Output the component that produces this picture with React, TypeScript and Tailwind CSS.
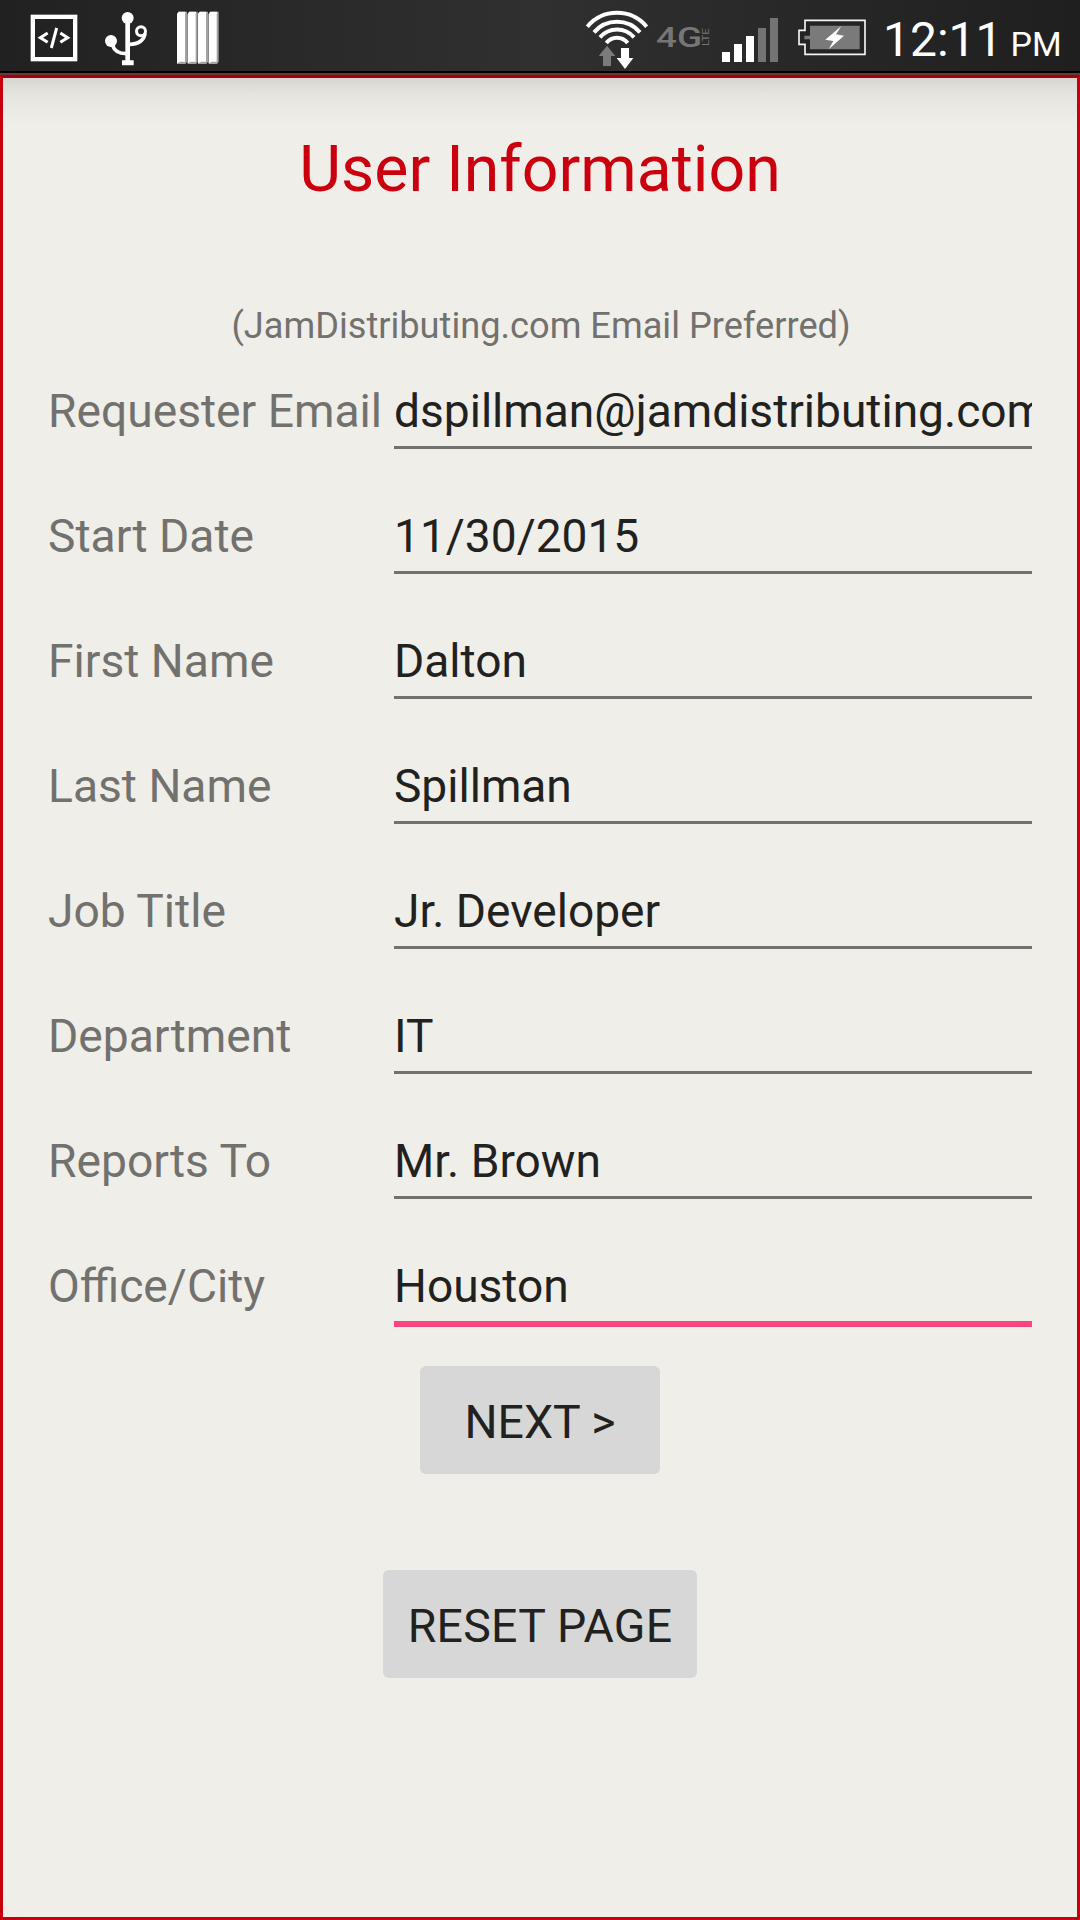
import React, { useState } from 'react';

interface Field {
  id: string;
  label: string;
  value: string;
}

const initialFields: Field[] = [
  { id: 'email', label: 'Requester Email', value: 'dspillman@jamdistributing.com' },
  { id: 'startDate', label: 'Start Date', value: '11/30/2015' },
  { id: 'firstName', label: 'First Name', value: 'Dalton' },
  { id: 'lastName', label: 'Last Name', value: 'Spillman' },
  { id: 'jobTitle', label: 'Job Title', value: 'Jr. Developer' },
  { id: 'department', label: 'Department', value: 'IT' },
  { id: 'reportsTo', label: 'Reports To', value: 'Mr. Brown' },
  { id: 'office', label: 'Office/City', value: 'Houston' },
];

const CodeIcon = () => (
  <svg className="w-12 h-[71px] shrink-0" viewBox="90 0 144 213" fill="none" stroke="#fff">
    <rect x="98.500" y="50.500" width="127" height="127" strokeWidth="13" />
    <path d="M143 99 L121 113 L143 127 M181 99 L203 113 L181 127" strokeWidth="9" />
    <path d="M170 84 L154 144" strokeWidth="9" />
  </svg>
);

const UsbIcon = () => (
  <svg className="w-11 h-[71px] shrink-0" viewBox="312 0 132 213" fill="none">
    <circle cx="383" cy="54" r="18" fill="#fff" />
    <circle cx="333" cy="123" r="18" fill="#fff" />
    <circle cx="423" cy="94" r="13.500" stroke="#fff" strokeWidth="9" />
    <path d="M376 54h14v127h11v15h-35v-15h10z" fill="#fff" />
    <path d="M337 135 C343 153 357 161 378 161 M435 101 C433 120 415 133 388 133" stroke="#fff" strokeWidth="11" />
  </svg>
);

const StripesIcon = () => (
  <svg className="w-11 h-[71px] shrink-0" viewBox="528 0 132 213">
    {[531, 563, 594, 626].map((x) => (
      <g key={x}>
        <path d={`M${x} 42 l5 -7 h25 v150 l-5 7 h-25z`} fill="#a3a3a3" />
        <path d={`M${x} 42 l5 -7 h20 v4 l-1 4 v142 h-14 l-10 5z`} fill="#fff" />
      </g>
    ))}
  </svg>
);

const WifiIcon = () => (
  <svg className="w-16 h-[71px] shrink-0" viewBox="75 0 192 213" fill="none">
    <g stroke="#fff" strokeWidth="12">
      <path d="M82 80 A116 116 0 0 1 260 80" />
      <path d="M102 97 A91 91 0 0 1 240 97" />
      <path d="M120 112 A67 67 0 0 1 222 112" />
      <path d="M139 129 A40 40 0 0 1 203 129" />
    </g>
    <path d="M141 137 L166 168 H153 V198 H129 V168 H116z" fill="#7b7b7b" />
    <path d="M183 144 H207 V174 H220 L195 207 L170 174 H183z" fill="#fff" />
  </svg>
);

const NetworkType = () => (
  <svg className="w-[54px] h-[71px] shrink-0" viewBox="288 0 162 213" fill="#767676">
    <text x="288" y="140" textLength="138" lengthAdjust="spacingAndGlyphs" className="font-['Roboto'] font-medium text-[84px]">4G</text>
    <text transform="translate(447 138) rotate(-90)" textLength="53" lengthAdjust="spacingAndGlyphs" className="font-['Roboto'] text-[29px]">LTE</text>
  </svg>
);

const SignalIcon = () => (
  <svg className="w-[58px] h-[71px] shrink-0" viewBox="483 0 174 213">
    <path d="M486 156h24v30h-24z M522 132h24v54h-24z M558 108h24v78h-24z" fill="#fff" />
    <path d="M594 84h24v102h-24z M630 54h24v132h-24z" fill="#757373" />
  </svg>
);

const BatteryIcon = () => (
  <svg className="w-[68px] h-[71px] shrink-0" viewBox="54 0 204 213">
    <path d="M75 61 H255 V163 H75 V133 H57 V91 H75z" fill="#242222" stroke="#f4f4f4" strokeWidth="5" />
    <path d="M90 77 H239 V148 H90 V118 H73 V107 H90z" fill="#7b7a7a" />
    <path d="M184 78 L136 119 L160 123 L146 148 L192 107 L168 103z" fill="#fff" />
  </svg>
);

const StatusBar = () => (
  <div className="h-[73px] shrink-0 flex items-start bg-[linear-gradient(to_right,#222122,#303030_50%,#201f20)] border-b-2 border-black text-white pl-[30px]">
    <CodeIcon />
    <div className="ml-[26px]"><UsbIcon /></div>
    <div className="ml-7"><StripesIcon /></div>
    <div className="ml-auto"><WifiIcon /></div>
    <div className="ml-[7px]"><NetworkType /></div>
    <div className="ml-[11px]"><SignalIcon /></div>
    <div className="ml-[19px]"><BatteryIcon /></div>
    <div className="w-[214px] pl-[17px] flex items-baseline whitespace-nowrap leading-[79px]">
      <span className="text-[48px]">12:11</span>
      <span className="ml-2 text-[34px]">PM</span>
    </div>
  </div>
);

const App: React.FC = () => {
  const [fields, setFields] = useState<Field[]>(initialFields);
  const [focused, setFocused] = useState('office');

  const updateField = (id: string, value: string) => {
    setFields(fields.map((f) => (f.id === id ? { ...f, value } : f)));
  };

  return (
    <div className="w-[1080px] h-[1920px] flex flex-col overflow-hidden font-['Roboto',sans-serif] bg-[#efeee9]">
      <StatusBar />
      <div className="h-[2px] shrink-0 bg-[#6b3838]"></div>
      <main className="flex-1 flex flex-col items-center border-[3px] border-[#c7000f] border-t-[#a2000e] bg-[linear-gradient(to_bottom,#d7d6d1,#e5e4df_16px,#efeee9_46px)]">
        <h1 className="mt-[51px] h-20 leading-[80px] text-[64.4px] text-[#cb000e]">User Information</h1>
        <p className="mt-[97px] ml-0.5 h-10 leading-[40px] text-[36.2px] text-[#72716e]">(JamDistributing.com Email Preferred)</p>

        <form className="w-full pl-[45px] pr-[45px] mt-[15px]">
          {fields.map((f) => (
            <div key={f.id} className="flex h-[125px] pt-[18px]">
              <label htmlFor={f.id} className="w-[346px] shrink-0 leading-[64px] text-[46.2px] text-[#72716e] whitespace-nowrap">
                {f.label}
              </label>
              <div className="flex-1 min-w-0">
                <input
                  id={f.id}
                  type="text"
                  value={f.value}
                  onFocus={() => setFocused(f.id)}
                  onChange={(e) => updateField(f.id, e.target.value)}
                  className="block w-full h-[66px] text-[46.1px] text-[#212120] bg-transparent outline-none"
                />
                <div className={focused === f.id ? 'mt-px h-1.5 bg-[#fa4583]' : 'mt-px h-[3px] bg-[#72716e]'}></div>
              </div>
            </div>
          ))}
        </form>

        <button className="mt-[5px] w-60 h-[108px] rounded-md bg-[#d7d7d7] pt-[5px] text-[46.4px] text-[#212120]">NEXT &gt;</button>
        <button
          onClick={() => setFields(initialFields.map((f) => ({ ...f, value: '' })))}
          className="mt-24 w-[314px] h-[108px] rounded-md bg-[#d7d7d7] pt-[5px] text-[46.4px] tracking-[0.3px] text-[#212120]"
        >
          RESET PAGE
        </button>
      </main>
    </div>
  );
};

export default App;
